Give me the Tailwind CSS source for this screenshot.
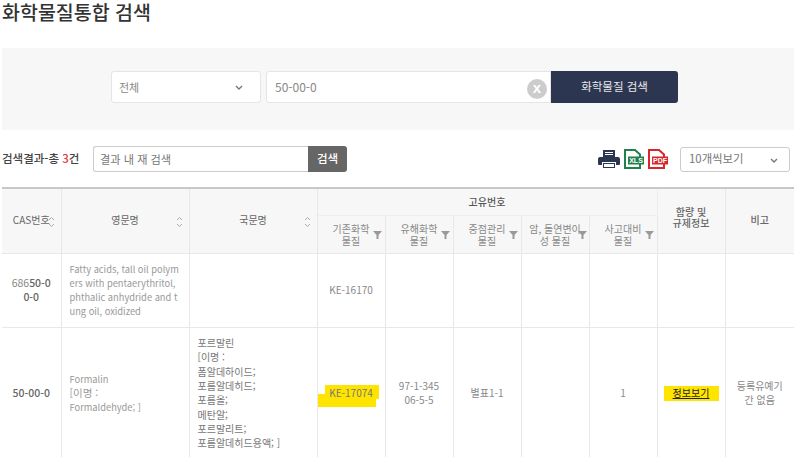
<!DOCTYPE html>
<html lang="ko">
<head>
    <meta charset="UTF-8">
    <meta name="viewport" content="width=device-width, initial-scale=1.0">
    <title>화학물질통합 검색</title>
    <script src="https://cdn.jsdelivr.net/npm/@tailwindcss/browser@4"></script>
</head>
<body class="bg-white text-[#555] font-['Noto_Sans_CJK_KR',sans-serif] h-[457px] overflow-hidden">
    <div class="w-[792px] ml-[2px]">
        <h1 class="text-[19.5px] leading-[24px] font-medium text-[#333]">화학물질통합 검색</h1>

        <!-- Search panel -->
        <div class="mt-[24px] h-[82px] bg-[#f7f7f7] pt-[23px] pl-[109px] flex items-start">
            <div class="relative w-[150px] h-[32px] bg-white border border-[#e5e5e5] rounded-[3px] flex items-center pl-[7px] text-[11px] text-[#888]">
                전체
                <svg class="absolute right-[17px] top-[13px] w-[8px] h-[5px]" viewBox="0 0 8 5" fill="none" stroke="#777" stroke-width="1.4"><path d="M1 1l3 3 3-3"/></svg>
            </div>
            <div class="relative ml-[5px] w-[285px] h-[32px] bg-white border border-[#e5e5e5] rounded-l-[3px] flex items-center pl-[8px] text-[12px] text-[#888]">
                50-00-0
                <span class="absolute right-[3px] top-[7px] w-[20px] h-[20px] rounded-full bg-[#cccccc] text-white text-[15px] leading-[18px] font-bold text-center font-['Liberation_Sans',sans-serif]">x</span>
            </div>
            <button class="w-[127px] h-[32px] bg-[#2d3650] text-white/90 text-[11.500px] rounded-r-[3px]">화학물질 검색</button>
        </div>

        <!-- Result toolbar -->
        <div class="mt-[16px] h-[26px] flex items-center">
            <span class="w-[91px] text-[11.500px] font-medium text-[#444]">검색결과-총 <span class="text-[#e8343b]">3</span>건</span>
            <div class="w-[215px] h-[26px] bg-white border border-[#ccc] border-r-0 rounded-l-[3px] flex items-center pl-[6px] text-[11.200px] text-[#777]">결과 내 재 검색</div>
            <button class="w-[39px] h-[26px] bg-[#666] text-white text-[11.500px] font-medium rounded-r-[3px]">검색</button>

            <!-- Export icons -->
            <svg class="ml-[251px] w-[22px] h-[20px]" viewBox="0 0 22 20">
                <path fill="#2d3650" d="M5 1h12v7H5z"/>
                <path fill="#fff" d="M7 3h8v1H7zM7 5h8v1H7z"/>
                <path fill="#2d3650" d="M2 8h18a2 2 0 012 2v5a1 1 0 01-1 1h-3v-3H4v3H1a1 1 0 01-1-1v-5a2 2 0 012-2z"/>
                <path fill="#2d3650" d="M5 14h12v5H5z"/>
                <path fill="#fff" d="M6 15h10v3H6z"/>
            </svg>
            <svg class="ml-[4px] w-[20px] h-[20px]" viewBox="0 0 20 20">
                <path fill="#fff" stroke="#22804a" stroke-width="2" d="M1 1h10l5 4.500V19H1z"/>
                <path fill="#22804a" d="M4 7.500h16V15.500H4z"/>
                <text x="12" y="14" text-anchor="middle" fill="#fff" font-size="7" font-weight="700" font-family="Liberation Sans">XLS</text>
            </svg>
            <svg class="ml-[4px] w-[20px] h-[20px]" viewBox="0 0 20 20">
                <path fill="#fff" stroke="#d8262c" stroke-width="2" d="M1 1h10l5 4.500V19H1z"/>
                <path fill="#d8262c" d="M4 7.500h16V15.500H4z"/>
                <text x="12" y="14" text-anchor="middle" fill="#fff" font-size="7" font-weight="700" font-family="Liberation Sans">PDF</text>
            </svg>

            <div class="relative ml-[12px] w-[110px] h-[25px] bg-white border border-[#ccc] rounded-[3px] flex items-center pl-[8px] text-[11.400px] text-[#777]">
                10개씩보기
                <svg class="absolute right-[11px] top-[10px] w-[8px] h-[5px]" viewBox="0 0 8 5" fill="none" stroke="#777" stroke-width="1.4"><path d="M1 1l3 3 3-3"/></svg>
            </div>
        </div>

        <!-- Results table -->
        <table class="mt-[15px] w-[792px] table-fixed border-collapse border-t-2 border-t-[#c8c8c8] text-[10px] leading-[14px] text-[#888]">
            <colgroup>
                <col class="w-[59px]"><col class="w-[128px]"><col class="w-[128px]">
                <col class="w-[68px]"><col class="w-[68px]"><col class="w-[68px]"><col class="w-[68px]"><col class="w-[68px]">
                <col class="w-[68px]"><col class="w-[69px]">
            </colgroup>
            <thead class="bg-[#f7f7f7]">
                <tr class="h-[27px]">
                    <th rowspan="2" class="relative border-r border-b border-[#e8e8e8] font-normal text-[#666]">
                        <span class="block -translate-y-[1px]">CAS번호</span>
                        <svg class="absolute right-[6px] top-[27px] w-[7px] h-[12px]" viewBox="0 0 7 12" fill="none" stroke="#aaa"><path d="M1 4l2.500-2.500L6 4M1 8l2.500 2.500L6 8"/></svg>
                    </th>
                    <th rowspan="2" class="relative border border-t-0 border-[#e8e8e8] font-normal text-[#666]">
                        <span class="block -translate-y-[1px]">영문명</span>
                        <svg class="absolute right-[6px] top-[27px] w-[7px] h-[12px]" viewBox="0 0 7 12" fill="none" stroke="#aaa"><path d="M1 4l2.500-2.500L6 4M1 8l2.500 2.500L6 8"/></svg>
                    </th>
                    <th rowspan="2" class="relative border border-t-0 border-[#e8e8e8] font-normal text-[#666]">
                        <span class="block -translate-y-[1px]">국문명</span>
                        <svg class="absolute right-[6px] top-[27px] w-[7px] h-[12px]" viewBox="0 0 7 12" fill="none" stroke="#aaa"><path d="M1 4l2.500-2.500L6 4M1 8l2.500 2.500L6 8"/></svg>
                    </th>
                    <th colspan="5" class="border border-t-0 border-[#eee] font-medium text-[#555]">고유번호</th>
                    <th rowspan="2" class="border border-t-0 border-[#e8e8e8] font-medium text-[#666]"><span class="block leading-[11px] -translate-y-[4px]">함량 및<br>규제정보</span></th>
                    <th rowspan="2" class="border-b border-[#e8e8e8] font-medium text-[#666]"><span class="block -translate-y-[1px]">비고</span></th>
                </tr>
                <tr class="h-[38px] font-normal text-[#888]">
                    <th class="relative border border-[#e8e8e8] pt-[2px] font-normal leading-[12px]">기존화학<br>물질
                        <svg class="absolute right-[3px] top-[15px] w-[9px] h-[8px]" viewBox="0 0 9 8" fill="#999"><path d="M0 0h9L5.500 4v4h-2V4z"/></svg>
                    </th>
                    <th class="relative border border-[#e8e8e8] pt-[2px] font-normal leading-[12px]">유해화학<br>물질
                        <svg class="absolute right-[3px] top-[15px] w-[9px] h-[8px]" viewBox="0 0 9 8" fill="#999"><path d="M0 0h9L5.500 4v4h-2V4z"/></svg>
                    </th>
                    <th class="relative border border-[#e8e8e8] pt-[2px] font-normal leading-[12px]">중점관리<br>물질
                        <svg class="absolute right-[3px] top-[15px] w-[9px] h-[8px]" viewBox="0 0 9 8" fill="#999"><path d="M0 0h9L5.500 4v4h-2V4z"/></svg>
                    </th>
                    <th class="relative border border-[#e8e8e8] pt-[2px] font-normal leading-[12px]">암, 돌연변이<br>성 물질
                        <svg class="absolute right-[2px] top-[15px] w-[9px] h-[8px]" viewBox="0 0 9 8" fill="#999"><path d="M0 0h9L5.500 4v4h-2V4z"/></svg>
                    </th>
                    <th class="relative border border-[#e8e8e8] pt-[2px] font-normal leading-[12px]">사고대비<br>물질
                        <svg class="absolute right-[3px] top-[15px] w-[9px] h-[8px]" viewBox="0 0 9 8" fill="#999"><path d="M0 0h9L5.500 4v4h-2V4z"/></svg>
                    </th>
                </tr>
            </thead>
            <tbody>
                <tr class="h-[74px] border-b border-[#e8e8e8]">
                    <td class="border-r border-[#e8e8e8] text-center text-[10.500px]">686<b class="font-medium text-[#666]">50-0<br>0-0</b></td>
                    <td class="border-r border-[#e8e8e8] px-[8px] whitespace-nowrap text-[9.300px] text-[#999]">Fatty acids, tall oil polym<br>ers with pentaerythritol,<br>phthalic anhydride and t<br>ung oil, oxidized</td>
                    <td class="border-r border-[#e8e8e8]"></td>
                    <td class="border-r border-[#e8e8e8] text-center">KE-16170</td>
                    <td class="border-r border-[#e8e8e8]"></td>
                    <td class="border-r border-[#e8e8e8]"></td>
                    <td class="border-r border-[#e8e8e8]"></td>
                    <td class="border-r border-[#e8e8e8]"></td>
                    <td class="border-r border-[#e8e8e8]"></td>
                    <td></td>
                </tr>
                <tr class="h-[132px]">
                    <td class="border-r border-[#e8e8e8] text-center text-[10.500px] font-medium text-[#666]">50-00-0</td>
                    <td class="border-r border-[#e8e8e8] px-[8px] text-[9.300px] text-[#999]">Formalin<br><span class="text-[10.500px]">[이명 :</span><br>Formaldehyde; ]</td>
                    <td class="border-r border-[#e8e8e8] px-[8px] leading-[14.300px] text-[#777]">포르말린<br>[이명 :<br>폼알데하이드;<br>포름알데히드;<br>포름올;<br>메탄알;<br>포르말리트;<br>포름알데히드용액; ]</td>
                    <td class="relative border-r border-[#e8e8e8] text-center text-[#777]">
                        <span class="absolute left-[7px] top-[57px] w-[54px] h-[14px] bg-[#ffe400]"></span>
                        <span class="absolute left-0 top-[66px] w-[58px] h-[13px] bg-[#ffe400]"></span>
                        <span class="relative">KE-17074</span>
                    </td>
                    <td class="border-r border-[#e8e8e8] text-center">97-1-345<br>06-5-5</td>
                    <td class="border-r border-[#e8e8e8] text-center">별표1-1</td>
                    <td class="border-r border-[#e8e8e8]"></td>
                    <td class="border-r border-[#e8e8e8] text-center">1</td>
                    <td class="border-r border-[#e8e8e8] text-center">
                        <a href="#" class="inline-block w-[55px] h-[15px] bg-[#ffe400] text-[#222] underline">정보보기</a>
                    </td>
                    <td class="text-center">등록유예기<br>간 없음</td>
                </tr>
            </tbody>
        </table>
    </div>
</body>
</html>
